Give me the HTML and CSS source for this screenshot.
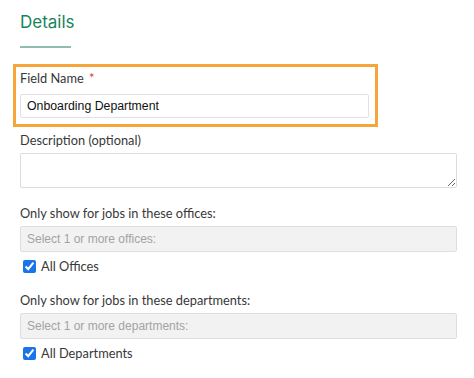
FILE: index.html
```html
<!DOCTYPE html>
<html lang="en">
<head>
    <meta charset="UTF-8">
    <title>Custom Field Details</title>
    <link rel="stylesheet" href="styles.css">
</head>
<body>
    <main class="details">
        <h2 class="section-title">Details</h2>
        <div class="title-rule"></div>

        <div class="field highlight">
            <label for="fieldName">Field Name <span class="required">*</span></label>
            <input type="text" id="fieldName" class="text-input" value="Onboarding Department">
        </div>

        <div class="field">
            <label for="description">Description (optional)</label>
            <textarea id="description" class="text-area"></textarea>
        </div>

        <div class="field filter">
            <label>Only show for jobs in these offices:</label>
            <input type="text" class="select-input" placeholder="Select 1 or more offices:" disabled>
            <label class="check"><input type="checkbox" checked> All Offices</label>
        </div>

        <div class="field filter">
            <label>Only show for jobs in these departments:</label>
            <input type="text" class="select-input" placeholder="Select 1 or more departments:" disabled>
            <label class="check"><input type="checkbox" checked> All Departments</label>
        </div>
    </main>
</body>
</html>
```

FILE: styles.css
```css
* { box-sizing: border-box; }
body { margin: 0; background: #fff; font-family: 'Lato', 'Noto Sans', sans-serif; color: #333; }
.details { padding: 12px 17px 0 20px; }
.section-title { margin: 0; font-size: 17px; line-height: 20px; font-weight: 400; color: #17855c; font-family: 'Inter', sans-serif; }
.title-rule { width: 51px; height: 2px; background: #8fbdb4; margin-top: 14px; margin-bottom: 16px; }

.field { display: flex; flex-direction: column; align-items: flex-start; margin-bottom: 16px; }
.field > label { font-size: 12.8px; line-height: 18px; color: #383838; margin-bottom: 5px; }
.filter { margin-bottom: 12px; }
.filter > label { margin-bottom: 4px; }
.required { color: #d0343a; margin-left: 2px; }

.highlight { width: 365px; margin: 0 0 4px -7px; padding: 2px 6px 6px 4px; border: 3px solid #f6a53b; }
.highlight > label { margin-bottom: 7px; }

.text-input { width: 100%; height: 24px; padding: 0 6px; border: 1px solid #e2e2e6; border-radius: 2px; font-family: 'Liberation Sans', Arial, sans-serif; font-size: 12.3px; color: #111; }
.text-area { width: 100%; height: 35px; border: 1px solid #dcdcdc; border-radius: 2px; margin-top: -1px; }

.select-input { width: 100%; height: 26px; padding: 0 6px; background: #f2f2f2; border: 1px solid #dedede; border-radius: 2px; font-family: 'Liberation Sans', Arial, sans-serif; font-size: 12px; }
.select-input::placeholder { color: #a3a3a3; }

.check { display: flex; align-items: center; margin-top: 5px; font-size: 12.8px; line-height: 18px; color: #222; }
.check input { width: 13px; height: 13px; margin: 0 5px 0 3px; accent-color: #1a73e8; }
```
